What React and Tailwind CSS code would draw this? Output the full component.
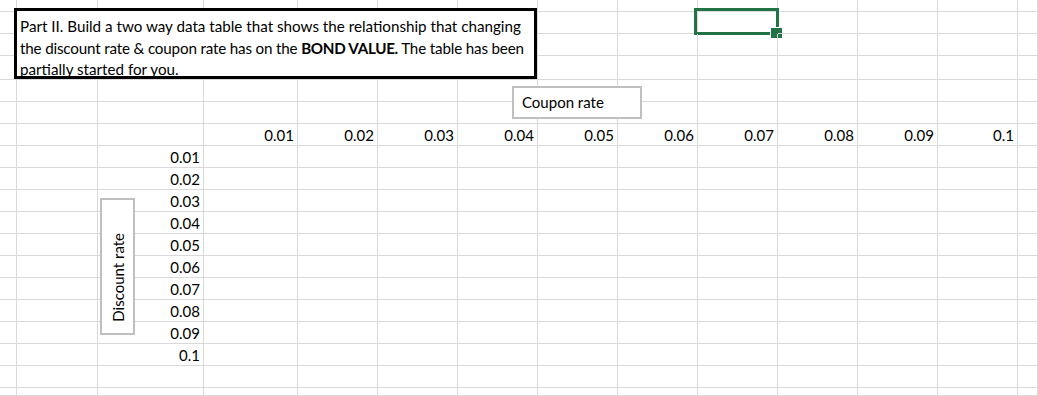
import React from 'react';

const rowHeights = [12, 22, 22, 24, 22, 22, 22, 22, 22, 22, 22, 22, 22, 22, 22, 22, 22, 22, 8];
const colCount = 14;
const couponRates = ['0.01', '0.02', '0.03', '0.04', '0.05', '0.06', '0.07', '0.08', '0.09', '0.1'];
const discountRates = ['0.01', '0.02', '0.03', '0.04', '0.05', '0.06', '0.07', '0.08', '0.09', '0.1'];

const cellText = (r, c) => {
    if (r === 6 && c >= 3 && c <= 12) return couponRates[c - 3];
    if (c === 2 && r >= 7 && r <= 16) return discountRates[r - 7];
    return '';
};

// selected cell with the fill handle
const ActiveCell = () => (
    <>
        <div className="absolute left-[-4px] top-[-4px] w-[85px] h-[27px] border-[3px] border-[#217346]" />
        <div className="absolute left-[72px] top-[15px] w-[13px] h-[12px] border border-white bg-[#217346]" />
    </>
);

const Sheet = () => {
    return (
        <div className="grid grid-cols-[17px_81px_106px_94px_repeat(9,80px)_20px] grid-rows-[12px_22px_22px_24px_repeat(14,22px)_8px]">
            {rowHeights.map((_, r) =>
                Array.from({ length: colCount }).map((__, c) => (
                    <div
                        key={`${r}-${c}`}
                        className="relative border-r border-b border-[#d9d9d9] flex items-end justify-end pr-[3px] pb-[1px] text-[15px] leading-[18px] text-black"
                    >
                        {cellText(r, c)}
                        {r === 1 && c === 9 && <ActiveCell />}
                    </div>
                ))
            )}
        </div>
    );
};

const App = () => {
    return (
        <div className="relative w-[1038px] h-[396px] overflow-hidden bg-white font-['Lato','Liberation_Sans',sans-serif]">
            <Sheet />

            {/* question text box */}
            <div className="absolute left-[14px] top-[8px] w-[523px] h-[71px] border-[3px] border-black bg-white pl-[3px] pt-[4px] text-[15.2px] leading-[22px] text-black whitespace-nowrap">
                <p>Part II. Build a two way data table that shows the relationship that changing</p>
                <p className="tracking-[-0.17px]">the discount rate &amp; coupon rate has on the <span className="font-bold tracking-[-0.3px]">BOND VALUE.</span> The table has been</p>
                <p className="-mt-[1px]">partially started for you.</p>
            </div>

            {/* coupon rate label */}
            <div className="absolute left-[512px] top-[86px] w-[130px] h-[33px] border-2 border-[#bfbfbf] bg-white pl-[8px] flex items-center text-[15px] text-black">
                Coupon rate
            </div>

            {/* discount rate label */}
            <div className="absolute left-[100px] top-[198px] w-[35px] h-[137px] border-2 border-[#bfbfbf] bg-white flex items-end justify-center pb-[11px]">
                <span className="[writing-mode:vertical-rl] rotate-180 text-[15px] leading-[18px] text-black">Discount rate</span>
            </div>
        </div>
    );
};

export default App;
